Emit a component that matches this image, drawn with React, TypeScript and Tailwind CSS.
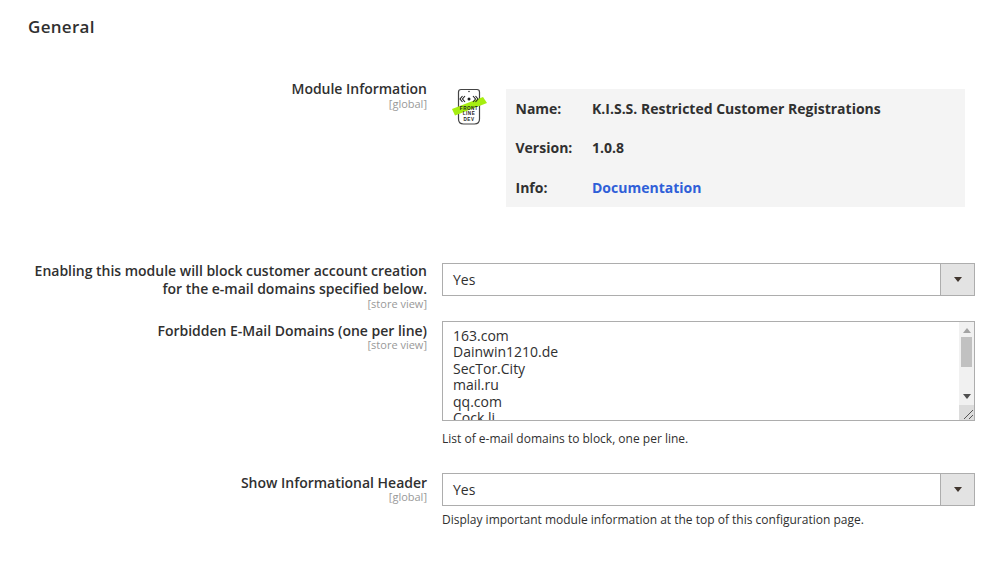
import React from "react";

function Label({ children, scope, cls = "", scopeCls = "" }: { children: React.ReactNode; scope: string; cls?: string; scopeCls?: string }) {
  return (
    <div className={"w-[427px] shrink-0 text-right " + cls}>
      <div className="text-[14px] leading-[18px] font-semibold text-[#303030] tracking-[-0.02px]">{children}</div>
      <div className={"text-[11px] leading-[11px] text-[#999999] " + scopeCls}>{scope}</div>
    </div>
  );
}

function Select({ value }: { value: string }) {
  return (
    <div className="h-[33px] border border-[#adadad] flex bg-white">
      <div className="flex-1 pl-[10px] text-[14px] leading-[32px] text-[#303030]">{value}</div>
      <div className="w-[34px] bg-[#e3e3e3] border-l border-[#adadad] flex items-center justify-center">
        <div className="w-0 h-0 border-l-[4.5px] border-r-[4.5px] border-t-[5px] border-l-transparent border-r-transparent border-t-[#41362f]" />
      </div>
    </div>
  );
}

const domains = "163.com\nDainwin1210.de\nSecTor.City\nmail.ru\nqq.com\nCock.li\nyandex.ru\nmailinator.com\nguerrillamail.com\ntempmail.com\nsharklasers.com\nyopmail.com";

const logoText = { textAnchor: "middle", fontSize: 4.6, fontWeight: 700, letterSpacing: 0.5, fontFamily: "'Liberation Sans',sans-serif", fill: "#222" } as const;

export default function App() {
  return (
    <div className="w-[984px] h-[575px] bg-white overflow-hidden font-['Open_Sans',sans-serif] text-[#303030]">
      <h2 className="pl-[28px] pt-[15px] text-[17px] leading-[23px] font-semibold tracking-[0.3px] text-[#303030]">General</h2>

      <div className="flex mt-[41px]">
        <Label scope="[global]" cls="pt-[1px]">Module Information</Label>
        <div className="ml-[25px] mt-[9px] w-[36px] h-[38px] shrink-0">
          <svg width="36" height="38" viewBox="0 0 36 38">
            <path d="M9 1.5 H25 Q27.5 1.5 27.5 4 V31 Q27.5 36 22.5 36 H11.5 Q6.5 36 6.5 31 V4 Q6.5 1.5 9 1.5 Z" fill="#fff" stroke="#444" strokeWidth="1.2" />
            <path d="M0 21 L31 9 L35 15 L3 27.5 Z" fill="#a6ee10" />
            <circle cx="17" cy="3.5" r="0.8" fill="#333" />
            <path d="M10.5 8 l-2.5 3 2.5 3 M13 8 l-2.5 3 2.5 3 M21 8 l2.5 3 -2.5 3 M23.5 8 l2.5 3 -2.5 3" fill="none" stroke="#222" strokeWidth="1.1" />
            <circle cx="17" cy="11" r="1.5" fill="#222" />
            <text x="17" y="21.5" {...logoText}>FRONT</text>
            <text x="17" y="27" {...logoText}>LINE</text>
            <text x="17" y="32.5" {...logoText}>DEV</text>
          </svg>
        </div>
        <div className="ml-[18px] mt-[10px] w-[459px] h-[118px] bg-[#f4f4f4] text-[14px] font-bold pl-[9.5px] pt-[10px] leading-[19px]">
          <div className="flex h-[39px]"><span className="w-[76.5px]">Name:</span><span>K.I.S.S. Restricted Customer Registrations</span></div>
          <div className="flex h-[40px]"><span className="w-[76.5px]">Version:</span><span>1.0.8</span></div>
          <div className="flex"><span className="w-[76.5px]">Info:</span><span className="text-[#2f5fd8]">Documentation</span></div>
        </div>
      </div>

      <div className="flex mt-[56px]">
        <Label scope="[store view]" cls="-mt-[1px]">Enabling this module will block customer account creation<br />for the e-mail domains specified below.</Label>
        <div className="ml-[15px] w-[533px]"><Select value="Yes" /></div>
      </div>

      <div className="flex mt-[12px]">
        <Label scope="[store view]" cls="pt-[1px]" scopeCls="-mt-[1px]">Forbidden E-Mail Domains (one per line)</Label>
        <div className="ml-[15px] w-[533px]">
          <div className="relative h-[100px]">
            <textarea
              readOnly
              defaultValue={domains}
              className="block w-full h-[100px] border border-[#adadad] px-[10px] py-[6px] text-[14px] leading-[16.4px] text-[#303030] overflow-hidden outline-none resize-none"
            />
            <div className="absolute right-[1px] top-[1px] bottom-[1px] w-[15px] bg-[#f1f1f1]">
              <div className="absolute left-[3.5px] top-[6px] w-0 h-0 border-l-[4px] border-r-[4px] border-b-[5px] border-l-transparent border-r-transparent border-b-[#a3a3a3]" />
              <div className="absolute left-[2px] top-[15px] w-[11px] h-[30px] bg-[#c1c1c1]" />
              <div className="absolute left-[3.5px] top-[72px] w-0 h-0 border-l-[4px] border-r-[4px] border-t-[5px] border-l-transparent border-r-transparent border-t-[#505050]" />
              <div className="absolute left-0 bottom-0 w-[15px] h-[15px] bg-[#dcdcdc]">
                <svg className="absolute right-0 bottom-0" width="14" height="14" viewBox="0 0 14 14"><path d="M13 4L4 13M13 9L9 13" stroke="#555" strokeWidth="1" /></svg>
              </div>
            </div>
          </div>
          <div className="text-[12px] leading-[16px] mt-[10px] text-[#303030]">List of e-mail domains to block, one per line.</div>
        </div>
      </div>

      <div className="flex mt-[26px]">
        <Label scope="[global]" cls="pt-[1px]" scopeCls="-mt-[1px]">Show Informational Header</Label>
        <div className="ml-[15px] w-[533px]">
          <Select value="Yes" />
          <div className="text-[12px] leading-[16px] mt-[6px] text-[#303030]">Display important module information at the top of this configuration page.</div>
        </div>
      </div>
    </div>
  );
}
